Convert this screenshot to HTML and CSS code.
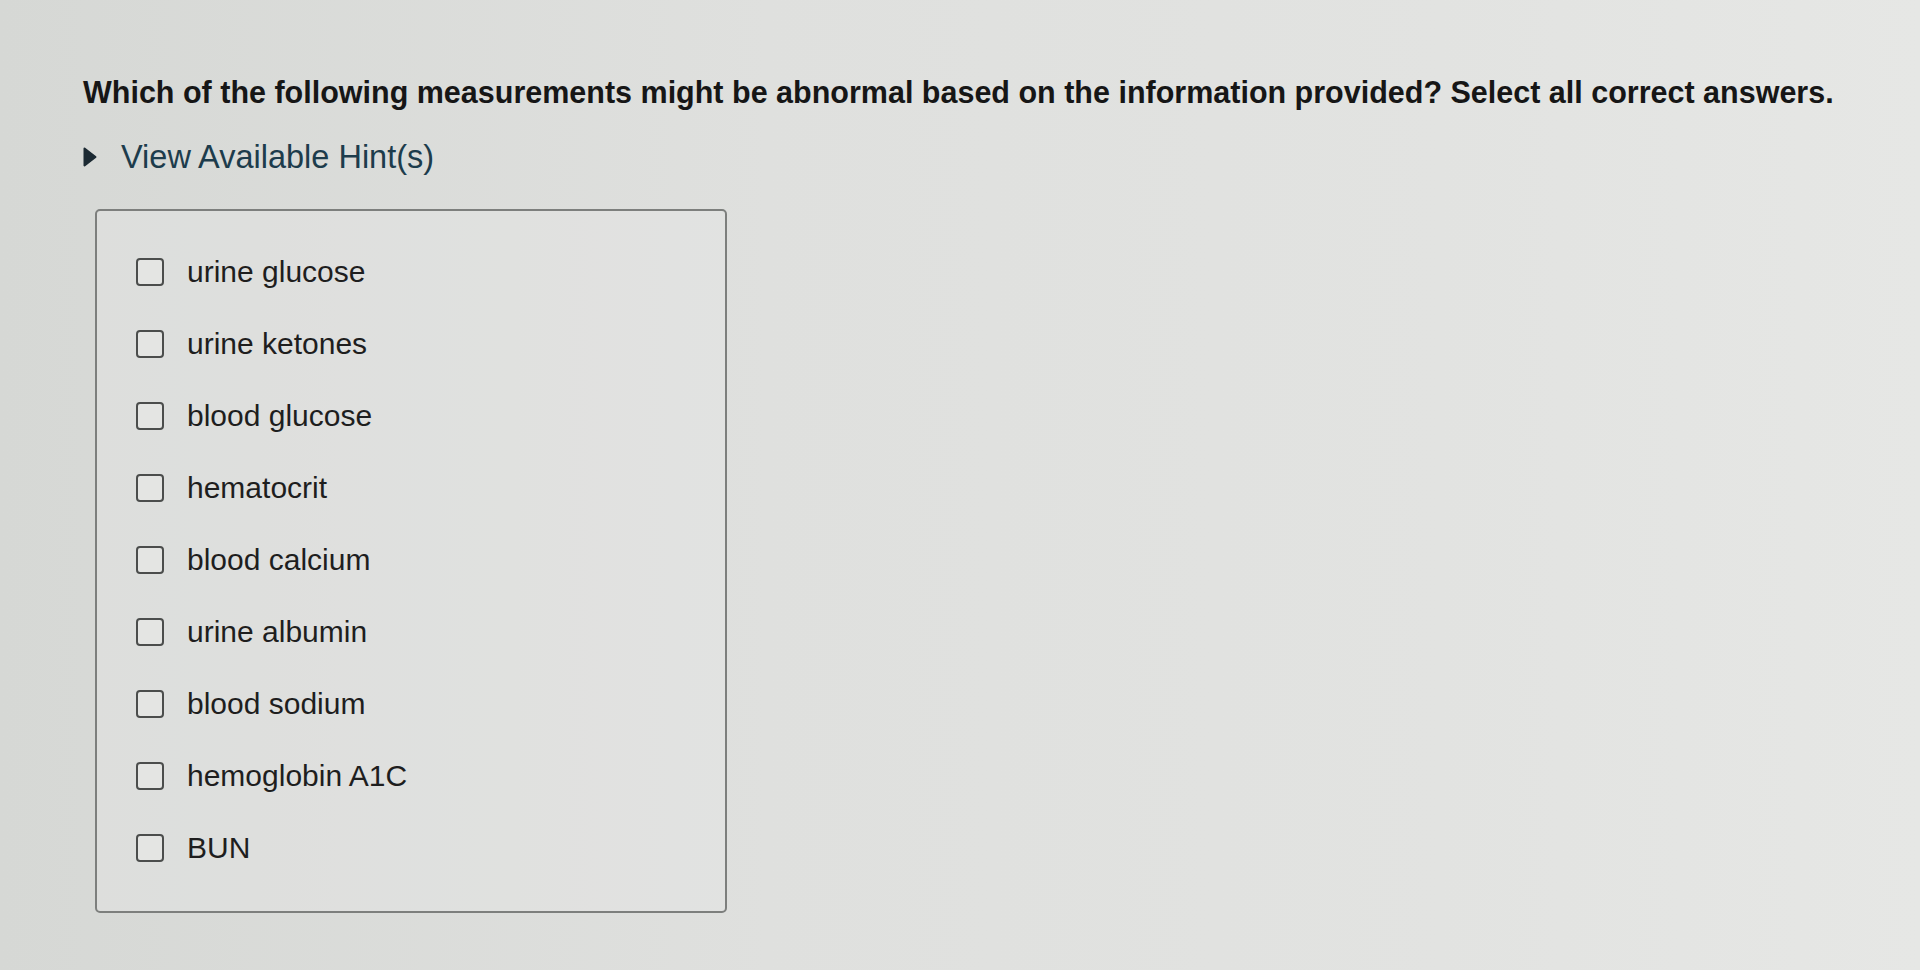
FILE: index.html
```html
<!DOCTYPE html>
<html lang="en">
<head>
<meta charset="utf-8">
<title>Question</title>
<link rel="stylesheet" href="styles.css">
</head>
<body>
<main class="page">
  <h1 class="question">Which of the following measurements might be abnormal based on the information provided? Select all correct answers.</h1>
  <div class="hint">
    <svg class="hint-arrow" width="14" height="20" viewBox="0 0 14 20"><path d="M1.5 1.5 L12.5 10 L1.5 18.5 Z" fill="#1c2a33" stroke="#1c2a33" stroke-width="2" stroke-linejoin="round"/></svg>
    <span class="hint-text">View Available Hint(s)</span>
  </div>
  <div class="answers">
    <label class="option"><span class="box"></span><span class="label">urine glucose</span></label>
    <label class="option"><span class="box"></span><span class="label">urine ketones</span></label>
    <label class="option"><span class="box"></span><span class="label">blood glucose</span></label>
    <label class="option"><span class="box"></span><span class="label">hematocrit</span></label>
    <label class="option"><span class="box"></span><span class="label">blood calcium</span></label>
    <label class="option"><span class="box"></span><span class="label">urine albumin</span></label>
    <label class="option"><span class="box"></span><span class="label">blood sodium</span></label>
    <label class="option"><span class="box"></span><span class="label">hemoglobin A1C</span></label>
    <label class="option"><span class="box"></span><span class="label">BUN</span></label>
  </div>
</main>
</body>
</html>
```

FILE: styles.css
```css
html, body {
  margin: 0;
  padding: 0;
  height: 100%;
}
body {
  background: linear-gradient(90deg, #d6d8d5 0%, #dfe0de 40%, #e2e3e1 75%, #e6e7e5 100%);
  font-family: "Liberation Sans", Arial, sans-serif;
  color: #1b1b1b;
  overflow: hidden;
}
.page {
  padding: 74px 0 0 83px;
}
.question {
  margin: 0;
  font-size: 30.5px;
  line-height: 36px;
  font-weight: bold;
  color: #161616;
  white-space: nowrap;
}
.hint {
  margin-top: 29px;
  display: flex;
  align-items: center;
  gap: 24px;
  height: 36px;
}
.hint-arrow {
  display: block;
  flex: none;
}
.hint-text {
  font-size: 32.5px;
  line-height: 36px;
  color: #1d3c4c;
}
.answers {
  margin: 34px 0 0 12px;
  width: 632px;
  box-sizing: border-box;
  height: 704px;
  border: 2px solid #7d7f7d;
  border-radius: 5px;
  padding: 25px 0 0 39px;
  display: flex;
  flex-direction: column;
  background: rgba(232, 233, 231, 0.35);
}
.option {
  display: flex;
  align-items: center;
  height: 72px;
  gap: 23px;
}
.box {
  width: 24px;
  height: 24px;
  border: 2px solid #4b4d4c;
  border-radius: 4px;
  background: #e4e5e3;
  flex: none;
}
.label {
  font-size: 30px;
  line-height: 36px;
  color: #1e1e1e;
}
```
